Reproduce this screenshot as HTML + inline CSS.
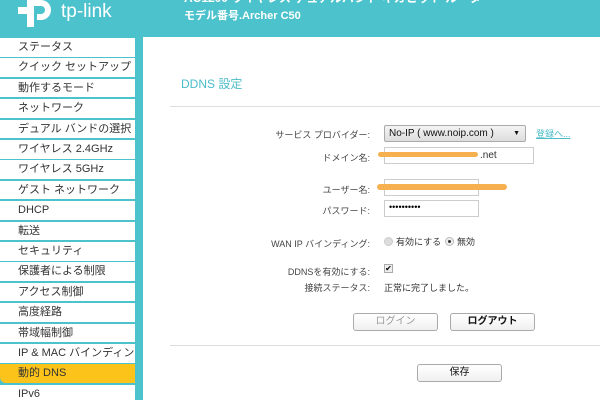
<!DOCTYPE html>
<html><head><meta charset="utf-8"><style>
*{margin:0;padding:0;box-sizing:border-box}
body{width:600px;height:400px;overflow:hidden;background:#fff;font-family:"Liberation Sans","Noto Sans CJK JP",sans-serif;position:relative}
.hdr{position:absolute;left:0;top:0;width:600px;height:37px;background:#4bc2cc}
.side{position:absolute;left:0;top:37px;width:143px;height:363px;background:#4bc2cc}
.item{position:absolute;left:0;width:135px;height:18.6px;background:#fff;font-size:11px;color:#333;padding-left:18px;line-height:18.6px;white-space:nowrap;overflow:hidden}
.item.sel{background:#fcc31a;border-radius:0 0 0 6px}
.lbl{position:absolute;right:230px;font-size:9px;color:#444;white-space:nowrap}
.inp{position:absolute;border:1px solid #ccc;background:#fff;height:17px}
.btn{position:absolute;border:1px solid #aaa;border-radius:3px;background:linear-gradient(#fff,#f0f0f0);font-size:10px;text-align:center;line-height:16px}
.t{position:absolute;font-size:9px;color:#333;white-space:nowrap}
</style></head><body>
<div class="hdr">
<svg style="position:absolute;left:0;top:0" width="60" height="30" viewBox="0 0 60 30"><rect x="18" y="7" width="16" height="7" fill="#fff"/><rect x="27" y="0" width="7" height="27" fill="#fff"/><path d="M34 0 H41 A10 10 0 0 1 41 20 H37 V14 H41 A4 4 0 0 0 41 6 H34Z" fill="#fff"/></svg>
<div style="position:absolute;left:61px;top:1px;font-size:19px;color:#fff">tp-link</div>
<div style="position:absolute;left:184px;top:-11px;font-size:12px;color:#fff;font-weight:bold;white-space:nowrap">AC1200 ワイヤレス デュアルバンド ギガビット ルーター</div>
<div style="position:absolute;left:184px;top:7px;font-size:11px;color:#fff;font-weight:bold;white-space:nowrap">モデル番号.Archer C50</div>
</div>
<div class="side">
<div class="item" style="top:1px">ステータス</div>
<div class="item" style="top:21.4px">クイック セットアップ</div>
<div class="item" style="top:41.8px">動作するモード</div>
<div class="item" style="top:62.2px">ネットワーク</div>
<div class="item" style="top:82.6px">デュアル バンドの選択</div>
<div class="item" style="top:103px">ワイヤレス 2.4GHz</div>
<div class="item" style="top:123.4px">ワイヤレス 5GHz</div>
<div class="item" style="top:143.8px">ゲスト ネットワーク</div>
<div class="item" style="top:164.2px">DHCP</div>
<div class="item" style="top:184.6px">転送</div>
<div class="item" style="top:205px">セキュリティ</div>
<div class="item" style="top:225.4px">保護者による制限</div>
<div class="item" style="top:245.8px">アクセス制御</div>
<div class="item" style="top:266.2px">高度経路</div>
<div class="item" style="top:286.6px">帯域幅制御</div>
<div class="item" style="top:307px">IP &amp; MAC バインディング</div>
<div class="item sel" style="top:327.4px">動的 DNS</div>
<div class="item" style="top:347.8px">IPv6</div>
</div>
<div style="position:absolute;left:181px;top:75px;font-size:12px;color:#4bbcc8">DDNS 設定</div>
<div style="position:absolute;left:170px;top:106px;width:430px;height:1px;background:#ddd"></div>
<div class="lbl" style="top:128px">サービス プロバイダー:</div>
<div style="position:absolute;left:384px;top:125px;width:142px;height:17px;border:1px solid #aaa;border-radius:2px;background:linear-gradient(#f4f4f4,#ddd);font-size:10px;line-height:15px;padding-left:4px;color:#111">No-IP ( www.noip.com )<span style="position:absolute;right:5px;font-size:7px">▼</span></div>
<div style="position:absolute;left:536px;top:127px;font-size:9px;color:#4bbcc8;text-decoration:underline">登録へ...</div>
<div class="lbl" style="top:151px">ドメイン名:</div>
<div class="inp" style="left:384px;top:147px;width:150px"><span style="position:absolute;left:95px;top:2px;font-size:10px;color:#333">.net</span></div>
<div style="position:absolute;left:378px;top:152px;width:100px;height:5px;background:#f7b050;border-radius:3px"></div>
<div class="lbl" style="top:183px">ユーザー名:</div>
<div class="inp" style="left:384px;top:179px;width:95px"></div>
<div style="position:absolute;left:377px;top:184px;width:130px;height:6px;background:#f7b050;border-radius:3px"></div>
<div class="lbl" style="top:204px">パスワード:</div>
<div class="inp" style="left:384px;top:200px;width:95px;font-size:9px;line-height:13px;padding-left:4px">••••••••••</div>
<div class="lbl" style="top:237px">WAN IP バインディング:</div>
<div style="position:absolute;left:384px;top:237px;width:9px;height:9px;border-radius:50%;background:#ddd;border:1px solid #ccc"></div>
<div class="t" style="left:396px;top:235px">有効にする</div>
<div style="position:absolute;left:445px;top:237px;width:9px;height:9px;border-radius:50%;background:#eee;border:1px solid #bbb"><div style="position:absolute;left:2px;top:2px;width:3px;height:3px;border-radius:50%;background:#333"></div></div>
<div class="t" style="left:457px;top:235px">無効</div>
<div class="lbl" style="top:265px">DDNSを有効にする:</div>
<div style="position:absolute;left:384px;top:264px;width:9px;height:9px;border:1px solid #aaa;background:#eee;font-size:8px;line-height:8px;text-align:center">✔</div>
<div class="lbl" style="top:281px">接続ステータス:</div>
<div class="t" style="left:384px;top:281px">正常に完了しました。</div>
<div class="btn" style="left:353px;top:313px;width:85px;height:18px;color:#999">ログイン</div>
<div class="btn" style="left:450px;top:313px;width:85px;height:18px;color:#111;font-weight:bold">ログアウト</div>
<div style="position:absolute;left:170px;top:345px;width:430px;height:1px;background:#ddd"></div>
<div class="btn" style="left:417px;top:364px;width:85px;height:18px;color:#111">保存</div>
</body></html>
